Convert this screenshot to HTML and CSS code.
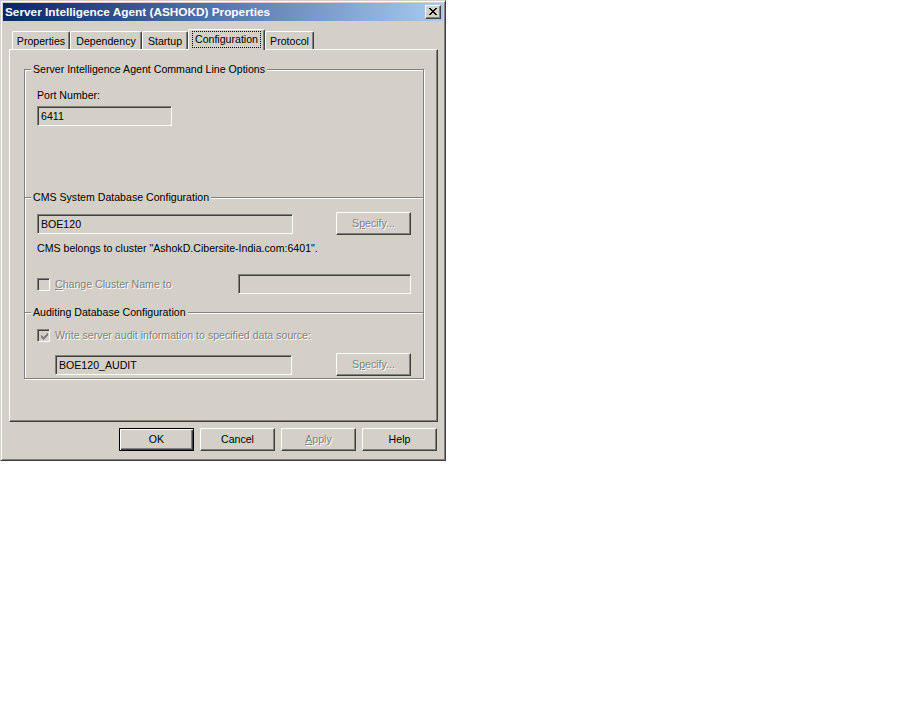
FILE: index.html
```html
<!DOCTYPE html>
<html>
<head>
<meta charset="utf-8">
<title>Server Intelligence Agent (ASHOKD) Properties</title>
<link rel="stylesheet" href="styles.css">
</head>
<body>
<div class="window">
  <div class="titlebar">
    <span class="title">Server Intelligence Agent (ASHOKD) Properties</span>
    <span class="close-btn">
      <svg class="close-glyph" width="8" height="7" viewBox="0 0 8 7" shape-rendering="crispEdges">
        <path d="M0 0h2v1h-2z M6 0h2v1h-2z M1 1h2v1h-2z M5 1h2v1h-2z M2 2h4v1h-4z M3 3h2v1h-2z M2 4h4v1h-4z M1 5h2v1h-2z M5 5h2v1h-2z M0 6h2v1h-2z M6 6h2v1h-2z" fill="#000"/>
      </svg>
    </span>
  </div>

  <div class="tabs">
    <div class="tab tab-properties">Properties</div>
    <div class="tab tab-dependency">Dependency</div>
    <div class="tab tab-startup">Startup</div>
    <div class="tab tab-selected tab-configuration"><span class="focus">Configuration</span></div>
    <div class="tab tab-protocol">Protocol</div>
  </div>

  <div class="panel">
    <div class="groups">
      <section class="grp grp-1">
        <div class="grp-head"><span class="stub"></span><span class="legend">Server Intelligence Agent Command Line Options</span><span class="rule"></span></div>
        <div class="field-label">Port Number:</div>
        <div class="input input-port">6411</div>
      </section>

      <section class="grp grp-2">
        <div class="grp-head"><span class="stub"></span><span class="legend">CMS System Database Configuration</span><span class="rule"></span></div>
        <div class="row row-cms">
          <div class="input input-cms">BOE120</div>
          <div class="btn btn-disabled"><span class="dis-text">S<u>p</u>ecify...</span></div>
        </div>
        <div class="info">CMS belongs to cluster "AshokD.Cibersite-India.com:6401".</div>
        <div class="row row-cluster">
          <span class="checkbox"></span>
          <span class="dis-text check-label"><u>C</u>hange Cluster Name to</span>
          <div class="input input-cluster"></div>
        </div>
      </section>

      <section class="grp grp-3">
        <div class="grp-head"><span class="stub"></span><span class="legend">Auditing Database Configuration</span><span class="rule"></span></div>
        <div class="row row-audit-check">
          <span class="checkbox">
            <svg class="check-glyph" width="7" height="7" viewBox="0 0 7 7" shape-rendering="crispEdges">
              <path d="M6 0h1v1h-1z M5 1h2v1h-2z M0 2h1v1h-1z M4 2h3v1h-3z M0 3h2v1h-2z M3 3h3v1h-3z M0 4h5v1h-5z M1 5h3v1h-3z M2 6h1v1h-1z" fill="#808080"/>
            </svg>
          </span>
          <span class="dis-text check-label">Write server audit information to specified data source:</span>
        </div>
        <div class="row row-audit">
          <div class="input input-audit">BOE120_AUDIT</div>
          <div class="btn btn-disabled"><span class="dis-text">S<u>p</u>ecify...</span></div>
        </div>
      </section>
    </div>
  </div>

  <div class="buttons">
    <div class="btn btn-default">OK</div>
    <div class="btn">Cancel</div>
    <div class="btn btn-disabled"><span class="dis-text"><u>A</u>pply</span></div>
    <div class="btn">Help</div>
  </div>
</div>
</body>
</html>
```

FILE: styles.css
```css
html, body {
  margin: 0;
  padding: 0;
  background: #ffffff;
}

body {
  font-family: "Liberation Sans", Arial, sans-serif;
  font-size: 10.6px;
  line-height: 13px;
  color: #000;
}

.window {
  box-sizing: border-box;
  width: 446px;
  height: 461px;
  background: #d4d0c8;
  border: 1px solid;
  border-color: #d4d0c8 #404040 #404040 #d4d0c8;
  box-shadow: inset 1px 1px #ffffff, inset -1px -1px #808080;
  padding: 2px;
  display: flex;
  flex-direction: column;
}

/* Title bar */
.titlebar {
  height: 18px;
  display: flex;
  align-items: center;
  background: linear-gradient(to right, #0a246a, #a6caf0);
  padding-left: 2px;
}

.title {
  flex: 1;
  color: #fff;
  font-weight: bold;
  font-size: 11.8px;
  white-space: nowrap;
}

.close-btn {
  box-sizing: border-box;
  width: 16px;
  height: 14px;
  margin-right: 2px;
  background: #d4d0c8;
  border: 1px solid;
  border-color: #fff #404040 #404040 #fff;
  box-shadow: inset -1px -1px #808080;
  display: flex;
  align-items: center;
  justify-content: center;
  padding: 0 1px 1px 0;
}

.close-glyph {
  display: block;
}

/* Tabs */
.tabs {
  display: flex;
  align-items: flex-end;
  height: 20px;
  margin-top: 8px;
  margin-left: 9px;
}

.tab {
  box-sizing: border-box;
  height: 18px;
  padding-top: 3px;
  text-align: center;
  border-top: 1px solid #fff;
  border-left: 1px solid #fff;
  border-right: 1px solid #404040;
  border-top-left-radius: 2px;
  border-top-right-radius: 2px;
  box-shadow: inset -1px 0 #808080;
  white-space: nowrap;
}

.tab-properties { width: 58px; }
.tab-dependency { width: 72px; }
.tab-startup { width: 46px; }
.tab-configuration { width: 77px; }
.tab-protocol { width: 49px; }

.tab-selected {
  position: relative;
  z-index: 1;
  height: 21px;
  margin-bottom: -1px;
  padding-top: 1px;
  background: #d4d0c8;
  display: flex;
  justify-content: center;
}

.focus {
  display: block;
  box-sizing: border-box;
  height: 17px;
  padding: 1px 2px 0;
  border: 1px dotted #000;
}

/* Panel */
.panel {
  box-sizing: border-box;
  width: 429px;
  height: 373px;
  margin-left: 6px;
  border: 1px solid;
  border-color: #fff #404040 #404040 #fff;
  box-shadow: inset -1px -1px #808080;
  padding-top: 19px;
  padding-left: 14px;
}

.groups {
  box-sizing: border-box;
  width: 400px;
  border: 1px solid #808080;
  box-shadow: inset 1px 1px #fff, 1px 1px #fff;
}

.grp {
  box-sizing: border-box;
  padding: 0 12px;
}

.grp-1 { height: 128px; margin-top: -7px; }
.grp-2 { height: 115px; }
.grp-3 { height: 72px; }

.grp-head {
  display: flex;
  height: 13px;
  margin: 0 -12px;
}

.stub, .rule {
  margin-top: 6px;
  border-top: 1px solid #808080;
  border-bottom: 1px solid #fff;
  height: 0;
}

.stub { width: 6px; }
.rule { flex: 1; }

.legend {
  padding: 0 2px;
  background: #d4d0c8;
  white-space: nowrap;
}

.field-label {
  margin-top: 13px;
}

/* Inputs */
.input {
  box-sizing: border-box;
  height: 20px;
  padding: 3px 0 0 3px;
  background: #d4d0c8;
  border: 1px solid;
  border-color: #808080 #fff #fff #808080;
  box-shadow: inset 1px 1px #404040;
  white-space: nowrap;
}

.input-port { width: 135px; margin-top: 4px; }
.input-cms { width: 256px; margin-top: 2px; }
.input-cluster { width: 173px; margin-left: auto; }
.input-audit { width: 237px; margin-top: 2px; margin-left: 18px; }

.row {
  display: flex;
}

.row-cms { margin-top: 8px; justify-content: space-between; align-items: flex-start; }
.info { margin-top: 7px; }
.row-cluster { margin-top: 19px; align-items: center; }
.row-audit-check { margin-top: 10px; align-items: center; }
.row-audit { margin-top: 11px; justify-content: space-between; align-items: flex-start; }

/* Checkbox */
.checkbox {
  box-sizing: border-box;
  width: 13px;
  height: 13px;
  flex: none;
  background: #d4d0c8;
  border: 1px solid;
  border-color: #808080 #fff #fff #808080;
  box-shadow: inset 1px 1px #404040;
  display: flex;
  align-items: center;
  justify-content: center;
  padding: 1px 0 0 1px;
}

.check-glyph { display: block; }

.check-label {
  margin-left: 5px;
  white-space: nowrap;
}

/* Disabled text */
.dis-text {
  color: #808080;
  text-shadow: 1px 1px 0 #fff;
}

/* Buttons */
.btn {
  box-sizing: border-box;
  width: 75px;
  height: 23px;
  flex: none;
  background: #d4d0c8;
  border: 1px solid;
  border-color: #fff #404040 #404040 #fff;
  box-shadow: inset -1px -1px #808080;
  display: flex;
  align-items: center;
  justify-content: center;
  padding-bottom: 1px;
}

.btn-default {
  border-color: #000;
  box-shadow: inset 1px 1px #fff, inset -1px -1px #404040, inset -2px -2px #808080;
}

.buttons {
  display: flex;
  justify-content: flex-end;
  gap: 6px;
  width: 429px;
  box-sizing: border-box;
  margin-top: 6px;
  margin-left: 6px;
  padding-right: 1px;
}
```
